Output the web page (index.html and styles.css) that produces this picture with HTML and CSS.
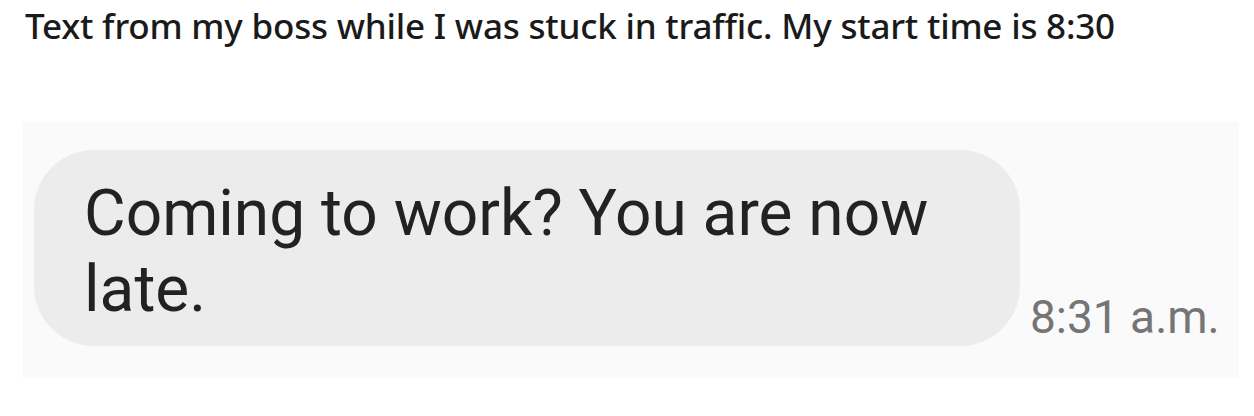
FILE: index.html
```html
<!DOCTYPE html>
<html>
<head>
<meta charset="utf-8">
<link rel="stylesheet" href="styles.css">
</head>
<body>
<h1 class="title">Text from my boss while I was stuck in traffic. My start time is 8:30</h1>
<div class="shot">
  <div class="bubble">Coming to work? You are now<br>late.</div>
  <div class="time">8:31 a.m.</div>
</div>
</body>
</html>
```
FILE: styles.css
```css
html, body {
  margin: 0;
  padding: 0;
  background: #ffffff;
}
.title {
  margin: 0;
  padding: 4px 0 0 25px;
  font-family: "Noto Sans", sans-serif;
  font-weight: 500;
  font-size: 35px;
  line-height: 44px;
  color: #1a1a1b;
  letter-spacing: -0.2px;
  white-space: nowrap;
}
.shot {
  margin: 74px 0 0 23px;
  width: 1216px;
  height: 256px;
  box-sizing: border-box;
  background: #fafafa;
  display: flex;
  align-items: flex-end;
  padding: 0 0 32px 11px;
}
.bubble {
  width: 986px;
  height: 196px;
  box-sizing: border-box;
  background: #ececec;
  border-radius: 60px;
  padding: 26px 0 0 50px;
  font-family: Roboto, sans-serif;
  font-size: 64px;
  line-height: 76px;
  color: #222222;
}
.time {
  margin: 0 0 6px 10px;
  font-family: Roboto, sans-serif;
  font-size: 46px;
  line-height: 46px;
  color: #757575;
}
```
